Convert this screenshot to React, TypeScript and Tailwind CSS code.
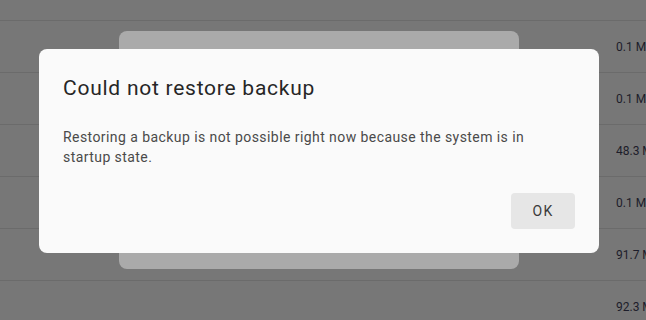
import React from "react";

const values = ["0.1 MB", "0.1 MB", "48.3 MB", "0.1 MB", "91.7 MB", "92.3 MB"];

export default function App() {
  return (
    <div
      className="relative h-[320px] w-[646px] overflow-hidden bg-[#777777]"
      style={{ fontFamily: "Roboto, 'Liberation Sans', sans-serif" }}
    >
      <div className="flex flex-col">
        <div className="h-[20px]" />
        {values.map((v, i) => (
          <div key={i} className="flex h-[52px] items-center border-t border-[#6b6b6b]">
            <div className="flex-1" />
            <div className="w-[30px] overflow-hidden whitespace-nowrap pt-[1px] text-[12px] text-[#1d1d2a]">
              {v}
            </div>
          </div>
        ))}
      </div>

      <div className="absolute left-[119px] top-[31px] h-[238px] w-[400px] rounded-lg bg-[#aaaaaa]" />

      <div className="absolute left-[39px] top-[49px] flex w-[560px] flex-col rounded-lg bg-[#fafafa] px-6 pb-6 pt-[23px]">
        <h2 className="text-[21px] font-normal leading-[32px] tracking-[0.75px] text-[#262626]">
          Could not restore backup
        </h2>
        <p className="mt-[23px] text-[14px] leading-[20px] tracking-[0.43px] text-[#4a4a4a]">
          Restoring a backup is not possible right now because the system is in startup state.
        </p>
        <div className="mt-[26px] flex justify-end">
          <button className="h-[36px] w-[64px] rounded bg-[#e6e6e6] text-[14px] font-normal tracking-[1.25px] text-[#3a3a3a]">
            OK
          </button>
        </div>
      </div>
    </div>
  );
}
